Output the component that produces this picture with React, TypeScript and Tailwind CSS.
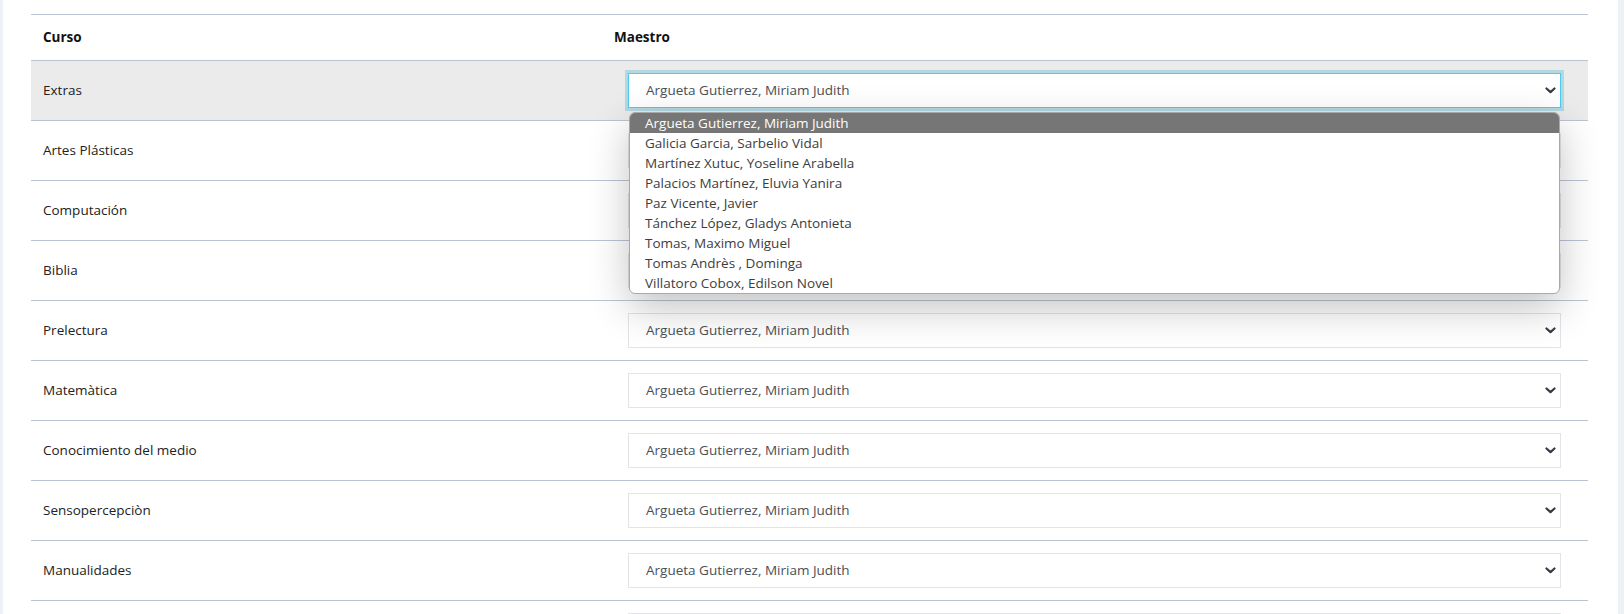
import React from "react";

const cursos = [
  "Extras",
  "Artes Plásticas",
  "Computación",
  "Biblia",
  "Prelectura",
  "Matemàtica",
  "Conocimiento del medio",
  "Sensopercepciòn",
  "Manualidades",
  "Inglés",
];

const maestros = [
  "Argueta Gutierrez, Miriam Judith",
  "Galicia Garcia, Sarbelio Vidal",
  "Martínez Xutuc, Yoseline Arabella",
  "Palacios Martínez, Eluvia Yanira",
  "Paz Vicente, Javier",
  "Tánchez López, Gladys Antonieta",
  "Tomas, Maximo Miguel",
  "Tomas Andrès , Dominga",
  "Villatoro Cobox, Edilson Novel",
];

const Chevron = () => (
  <svg width="11" height="7" viewBox="0 0 11 7" className="shrink-0">
    <path d="M1.5 1.5l4 3.6 4-3.6" fill="none" stroke="#343d46" strokeWidth="2.2" strokeLinecap="round" strokeLinejoin="round" />
  </svg>
);

const SelectBox = ({ value, open }: { value: string; open?: boolean }) => (
  <div className="relative">
    <div
      className={
        open
          ? "h-[35px] flex items-center justify-between pl-[17px] pr-[4px] bg-white border border-[#53c8ee] ring-[3px] ring-[#b2d8e2] text-[#495057]"
          : "h-[35px] flex items-center justify-between pl-[17px] pr-[4px] bg-white border border-[#e1e4e8] text-[#495057]"
      }
    >
      <span>{value}</span>
      <Chevron />
    </div>
    {open && (
      <div className="absolute z-10 left-[1px] right-[1px] top-[calc(100%+4px)] bg-white border border-[#a9a9a9] rounded-[6px] overflow-hidden shadow-[0_14px_40px_rgba(0,0,0,0.24)]">
        {maestros.map((m, i) => (
          <div
            key={m}
            className={
              i === 0
                ? "h-[20px] flex items-center px-[15px] bg-[#767676] text-white"
                : "h-[20px] flex items-center px-[15px] text-[#3d3d3d]"
            }
          >
            {m}
          </div>
        ))}
      </div>
    )}
  </div>
);

export default function App() {
  return (
    <div className="h-[614px] overflow-hidden bg-[#eef1f6] pl-[3px] pr-[6px] font-['Open_Sans',sans-serif] text-[13.5px]">
      <div className="h-full bg-white pl-[28px] pr-[30px] pt-[14px]">
        <div className="border-t border-[#bcc4d3]">
          <div className="grid grid-cols-[571px_1fr] h-[46px] border-b border-[#bcc4d3] items-center font-bold text-[#111]">
            <div className="px-[12px]">Curso</div>
            <div className="px-[12px]">Maestro</div>
          </div>
          {cursos.map((c, i) => (
            <div
              key={c}
              className={
                i === 0
                  ? "grid grid-cols-[571px_1fr] h-[60px] border-b border-[#bcc4d3] items-center bg-[#ebebeb]"
                  : "grid grid-cols-[571px_1fr] h-[60px] border-b border-[#bcc4d3] items-center"
              }
            >
              <div className="px-[12px] text-[#222]">{c}</div>
              <div className="pl-[26px] pr-[27px]">
                <SelectBox value={maestros[0]} open={i === 0} />
              </div>
            </div>
          ))}
        </div>
      </div>
    </div>
  );
}
